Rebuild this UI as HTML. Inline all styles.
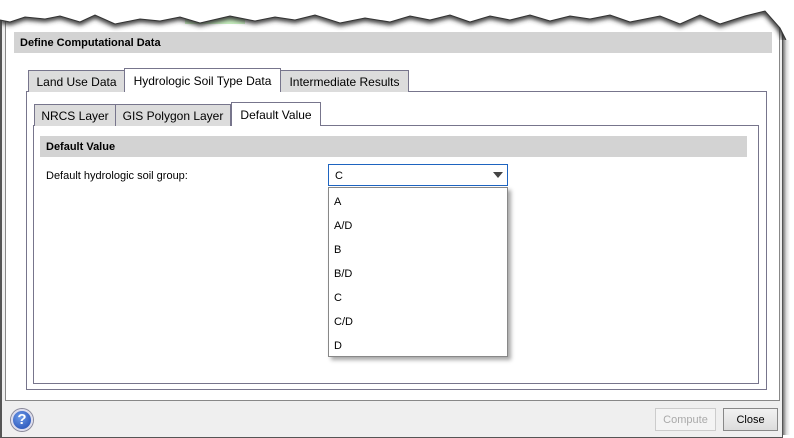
<!DOCTYPE html>
<html><head><style>
*{margin:0;padding:0;box-sizing:border-box}
body{width:794px;height:438px;background:#fff;position:relative;overflow:hidden;font-family:"Segoe UI","Liberation Sans",sans-serif;font-size:12px;color:#000}
.a{position:absolute}
.tab{position:absolute;background:#dcdcdc;border:1px solid #77758c;border-bottom:none;text-align:center;line-height:20px}
.tab.sel{background:#fff;height:24px !important;line-height:24px}
.it{position:absolute;left:334px;font-size:11px}
</style></head><body>
<div class="a" style="left:0;top:20px;width:783px;height:418px;border-left:2px solid #555;border-right:1px solid #555;border-bottom:1px solid #555;background:#efefef"></div>
<div class="a" style="left:783px;top:30px;width:7px;height:405px;background:linear-gradient(to right,#777,#ddd,#fff)"></div>
<div class="a" style="left:5px;top:20px;width:775px;height:381px;background:#fff;border-left:1px solid #888;border-right:1px solid #888;border-bottom:1px solid #888"></div>
<svg class="a" style="left:0;top:0" width="794" height="40">
<defs><filter id="b"><feGaussianBlur stdDeviation="2.5"/></filter></defs>
<rect x="0" y="0" width="794" height="14" fill="#fff"/>
<rect x="185" y="10" width="60" height="14" fill="#c8f0c0"/>
<polyline filter="url(#b)" fill="none" stroke="#333" stroke-width="6" points="0,20 10,22 25,17 45,19 60,16 80,22 95,15 115,24 140,19 160,21 180,17 200,23 230,16 255,21 275,17 295,20 315,15 340,23 365,18 390,22 410,16 430,20 450,15 470,22 490,16 510,20 530,15 550,21 570,16 590,19 610,15 630,22 660,16 680,24 700,15 720,24 745,16 765,11 780,28 786,40"/>
<polygon fill="#fff" points="0,0 794,0 794,40 786,40 780,28 765,11 745,16 720,24 700,15 680,24 660,16 630,22 610,15 590,19 570,16 550,21 530,15 510,20 490,16 470,22 450,15 430,20 410,16 390,22 365,18 340,23 315,15 295,20 275,17 255,21 230,16 200,23 180,17 160,21 140,19 115,24 95,15 80,22 60,16 45,19 25,17 10,22 0,20"/>
<polyline fill="none" stroke="#333" stroke-width="1" points="0,20 10,22 25,17 45,19 60,16 80,22 95,15 115,24 140,19 160,21 180,17 200,23 230,16 255,21 275,17 295,20 315,15 340,23 365,18 390,22 410,16 430,20 450,15 470,22 490,16 510,20 530,15 550,21 570,16 590,19 610,15 630,22 660,16 680,24 700,15 720,24 745,16 765,11 780,28 786,40"/>
</svg>
<div class="a" style="left:14px;top:32px;width:758px;height:21px;background:#d3d3d3;font-weight:bold;font-size:11px;line-height:22px;padding-left:6px">Define Computational Data</div>
<div class="a" style="left:26px;top:91px;width:741px;height:299px;border:1px solid #77758c;background:#fff"></div>
<div class="tab" style="left:28px;top:70px;width:97px;height:22px;line-height:22px">Land Use Data</div>
<div class="tab" style="left:280px;top:70px;width:129px;height:22px;line-height:22px">Intermediate Results</div>
<div class="tab sel" style="left:124px;top:68px;width:157px;height:24px">Hydrologic Soil Type Data</div>
<div class="a" style="left:33px;top:125px;width:726px;height:259px;border:1px solid #77758c;background:#fff"></div>
<div class="tab" style="left:34px;top:104px;width:82px;height:22px;line-height:22px">NRCS Layer</div>
<div class="tab" style="left:115px;top:104px;width:116px;height:22px;line-height:22px">GIS Polygon Layer</div>
<div class="tab sel" style="left:231px;top:102px;width:90px;height:24px">Default Value</div>
<div class="a" style="left:40px;top:136px;width:707px;height:21px;background:#d3d3d3;font-weight:bold;font-size:11px;line-height:22px;padding-left:6px">Default Value</div>
<div class="a" style="left:46px;top:170px;font-size:11px">Default hydrologic soil group:</div>
<div class="a" style="left:328px;top:164px;width:180px;height:22px;border:1px solid #1e64c0;font-size:11px;line-height:22px;padding-left:6px">C</div>
<div class="a" style="left:493px;top:172px;width:0;height:0;border-left:5px solid transparent;border-right:5px solid transparent;border-top:6px solid #444"></div>
<div class="a" style="left:328px;top:187px;width:180px;height:170px;border:1px solid #888;background:#fff;box-shadow:3px 3px 4px rgba(0,0,0,.35)"></div>
<div class="it" style="top:196px">A</div>
<div class="it" style="top:220px">A/D</div>
<div class="it" style="top:244px">B</div>
<div class="it" style="top:268px">B/D</div>
<div class="it" style="top:292px">C</div>
<div class="it" style="top:316px">C/D</div>
<div class="it" style="top:340px">D</div>
<div class="a" style="left:11px;top:409px;width:22px;height:22px;border-radius:50%;background:radial-gradient(circle at 40% 35%,#6d9ae8,#1d48b0);border:2px solid #dde;box-shadow:0 0 0 1px #889;color:#fff;font-weight:bold;font-size:15px;text-align:center;line-height:18px">?</div>
<div class="a" style="left:655px;top:408px;width:61px;height:23px;border:1px solid #ccc;background:#f4f4f4;color:#aaa;text-align:center;line-height:22px;font-size:11px">Compute</div>
<div class="a" style="left:723px;top:408px;width:55px;height:23px;border:1px solid #888;background:linear-gradient(#f2f2f2,#dcdcdc);text-align:center;line-height:22px;font-size:11px">Close</div>
</body></html>
